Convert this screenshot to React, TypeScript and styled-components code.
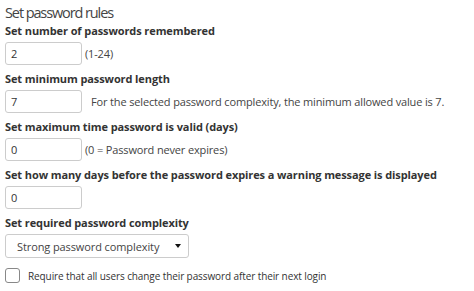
import React, { useState } from 'react';
import styled, { createGlobalStyle } from 'styled-components';

const GlobalStyle = createGlobalStyle`
  body {
    margin: 0;
    background: #ffffff;
    font-family: "Open Sans", "Liberation Sans", sans-serif;
    color: #333333;
  }
`;

const Panel = styled.div`
  padding: 3px 5px 0 5px;
  display: flex;
  flex-direction: column;
`;

const Title = styled.h2`
  margin: 0;
  font-size: 14.5px;
  line-height: 20px;
  font-weight: 400;
  letter-spacing: -1.1px;
  color: #444444;
`;

const Field = styled.div`
  display: flex;
  flex-direction: column;
  margin-bottom: 6px;
`;

const Label = styled.label`
  font-size: 11px;
  line-height: 16px;
  font-weight: 700;
  letter-spacing: -0.1px;
  color: #333333;
  margin-bottom: 3px;
  white-space: nowrap;
`;

const Row = styled.div`
  display: flex;
  align-items: center;
`;

const TextInput = styled.input`
  box-sizing: border-box;
  width: 77px;
  height: 23px;
  border: 1px solid #cccccc;
  border-radius: 3px;
  padding: 0 5px;
  font-family: inherit;
  font-size: 11px;
  color: #333333;
  outline: none;
`;

const Hint = styled.span<{ $gap: number }>`
  margin-left: ${p => p.$gap}px;
  font-size: 11px;
  letter-spacing: -0.15px;
  color: #444444;
  white-space: nowrap;
`;

const SelectBox = styled.div`
  box-sizing: border-box;
  width: 184px;
  height: 24px;
  border: 1px solid #cccccc;
  border-radius: 3px;
  display: flex;
  align-items: center;
  justify-content: space-between;
  padding: 0 7px 0 11px;
  font-size: 11px;
  letter-spacing: -0.1px;
  color: #444444;
  white-space: nowrap;
`;

const Caret = styled.span`
  width: 0;
  height: 0;
  border-left: 3.5px solid transparent;
  border-right: 3.5px solid transparent;
  border-top: 4px solid #111111;
`;

const CheckRow = styled.label`
  display: flex;
  align-items: center;
  margin-top: 4px;
  font-size: 10px;
  letter-spacing: -0.1px;
  color: #333333;
  white-space: nowrap;
`;

const Box = styled.span<{ $on: boolean }>`
  box-sizing: border-box;
  width: 15px;
  height: 15px;
  border: 1px solid #888888;
  border-radius: 3px;
  margin-right: 8px;
  background: ${p => (p.$on ? '#3a7bd5' : '#ffffff')};
`;

const fields = [
  { label: 'Set number of passwords remembered', value: '2', hint: '(1-24)', gap: 3 },
  {
    label: 'Set minimum password length',
    value: '7',
    hint: 'For the selected password complexity, the minimum allowed value is 7.',
    gap: 9,
  },
  { label: 'Set maximum time password is valid (days)', value: '0', hint: '(0 = Password never expires)', gap: 3 },
  {
    label: 'Set how many days before the password expires a warning message is displayed',
    value: '0',
    hint: '',
    gap: 0,
  },
];

export default function App() {
  const [forceChange, setForceChange] = useState(false);

  return (
    <>
      <GlobalStyle />
      <Panel>
        <Title>Set password rules</Title>
        {fields.map(f => (
          <Field key={f.label}>
            <Label>{f.label}</Label>
            <Row>
              <TextInput defaultValue={f.value} />
              {f.hint && <Hint $gap={f.gap}>{f.hint}</Hint>}
            </Row>
          </Field>
        ))}
        <Field>
          <Label>Set required password complexity</Label>
          <SelectBox>
            <span>Strong password complexity</span>
            <Caret />
          </SelectBox>
        </Field>
        <CheckRow onClick={() => setForceChange(v => !v)}>
          <Box $on={forceChange} />
          Require that all users change their password after their next login
        </CheckRow>
      </Panel>
    </>
  );
}
